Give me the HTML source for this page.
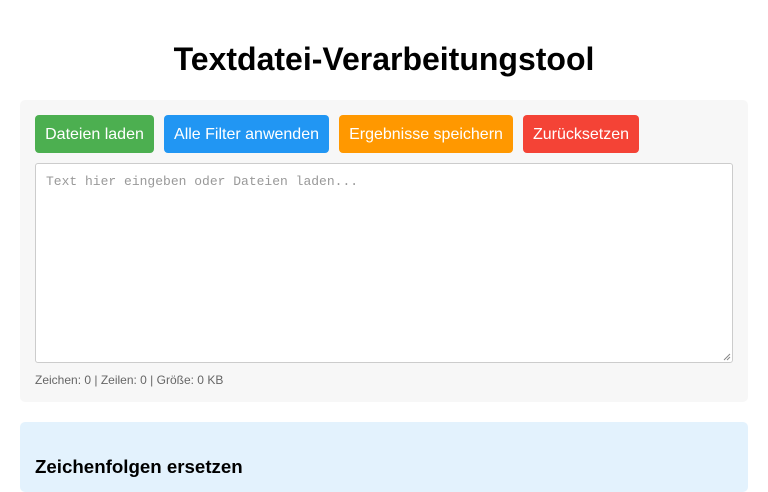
<!DOCTYPE html>
<html><head><meta charset="utf-8"><style>
body{margin:0;background:#fff;font-family:"Liberation Sans",sans-serif;width:768px;height:480px;overflow:hidden;position:relative}
h1{position:absolute;top:40px;left:0;width:768px;text-align:center;margin:0;font-size:32px;font-weight:bold;color:#000;line-height:38px}
.panel{position:absolute;left:20px;top:100px;width:728px;height:302px;background:#f7f7f7;border-radius:5px}
.btn{position:absolute;top:115px;height:38px;line-height:40px;color:#fff;font-size:16px;border-radius:4px;text-align:center}
.ta{position:absolute;left:35px;top:163px;width:696px;height:198px;background:#fff;border:1px solid #ccc;border-radius:3px}
.ta span{position:absolute;left:10px;top:10px;font-family:"Liberation Mono",monospace;font-size:13px;color:#999}
.stat{position:absolute;left:35px;top:373px;font-size:12px;color:#666}
.p2{position:absolute;left:20px;top:422px;width:728px;height:70px;background:#e3f2fd;border-radius:5px}
h3{position:absolute;left:35px;top:456px;margin:0;font-size:18.7px;font-weight:bold;line-height:22px}
</style></head><body>
<h1>Textdatei-Verarbeitungstool</h1>
<div class="panel"></div>
<div class="btn" style="left:35px;width:119px;background:#4caf50">Dateien laden</div>
<div class="btn" style="left:164px;width:165px;background:#2196f3">Alle Filter anwenden</div>
<div class="btn" style="left:339px;width:174px;background:#ff9800">Ergebnisse speichern</div>
<div class="btn" style="left:523px;width:116px;background:#f44336">Zurücksetzen</div>
<div class="ta"><span>Text hier eingeben oder Dateien laden...</span>
<svg style="position:absolute;right:1px;bottom:1px" width="8" height="8"><path d="M7 1L1 7M7 4L4 7" stroke="#888" stroke-width="1"/></svg></div>
<div class="stat">Zeichen: 0 | Zeilen: 0 | Größe: 0 KB</div>
<div class="p2"></div>
<h3>Zeichenfolgen ersetzen</h3>
</body></html>
